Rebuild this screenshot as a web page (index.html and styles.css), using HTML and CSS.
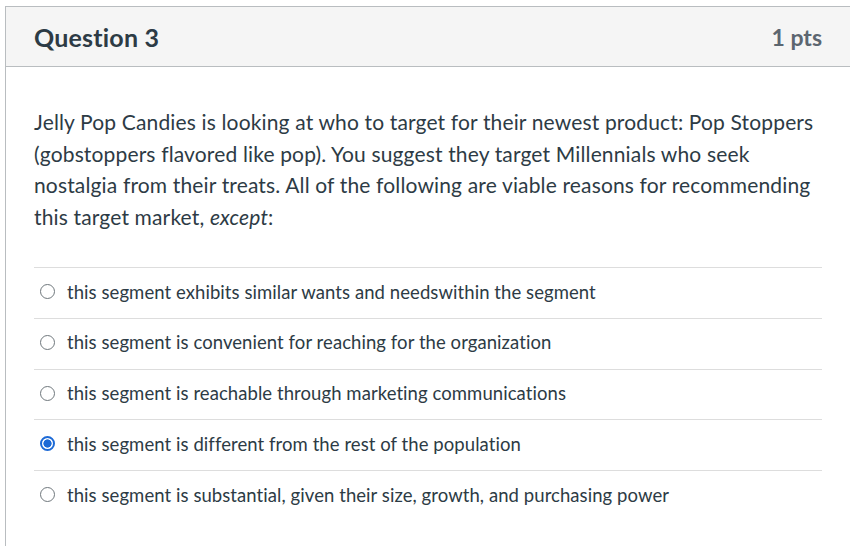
FILE: index.html
```html
<!DOCTYPE html>
<html>
<head>
<meta charset="utf-8">
<link rel="stylesheet" href="styles.css">
</head>
<body>
<div class="question">
  <div class="header">
    <h2 class="title">Question 3</h2>
    <span class="pts">1 pts</span>
  </div>
  <div class="body">
    <p class="text">Jelly Pop Candies is looking at who to target for their newest product: Pop Stoppers (gobstoppers flavored like pop). You suggest they target Millennials who seek nostalgia from their treats. All of the following are viable reasons for recommending this target market, <em>except</em>:</p>
    <div class="answers">
      <div class="answer"><span class="radio"></span><span class="label">this segment exhibits similar wants and needswithin the segment</span></div>
      <div class="answer"><span class="radio"></span><span class="label">this segment is convenient for reaching for the organization</span></div>
      <div class="answer"><span class="radio"></span><span class="label">this segment is reachable through marketing communications</span></div>
      <div class="answer"><span class="radio checked"></span><span class="label">this segment is different from the rest of the population</span></div>
      <div class="answer"><span class="radio"></span><span class="label">this segment is substantial, given their size, growth, and purchasing power</span></div>
    </div>
  </div>
</div>
</body>
</html>
```

FILE: styles.css
```css
html, body {
  margin: 0;
  padding: 0;
  background: #ffffff;
  overflow: hidden;
}
body {
  font-family: Lato, "Open Sans", sans-serif;
  color: #2d3b45;
}
.question {
  margin: 6px 0 0 5px;
  width: 846px;
  height: 540px;
  border: 1px solid #b9bdc0;
  border-bottom: none;
  box-sizing: border-box;
}
.header {
  display: flex;
  align-items: center;
  justify-content: space-between;
  height: 60px;
  padding: 1px 28px 0 28px;
  box-sizing: border-box;
  background: #f5f5f5;
  border-bottom: 1px solid #b9bdc0;
}
.title {
  margin: 0;
  font-size: 25px;
  letter-spacing: 0.2px;
  font-weight: 700;
  color: #2d3b45;
  line-height: 1;
}
.pts {
  font-size: 23px;
  font-weight: 700;
  color: #5c6670;
  line-height: 1;
}
.body {
  padding: 39px 28px 0 28px;
}
.text {
  margin: 0 0 35px 0;
  font-size: 21px;
  letter-spacing: 0.15px;
  line-height: 31.5px;
}
.answer {
  display: flex;
  align-items: center;
  border-top: 1px solid #dddddd;
  padding: 12.5px 0 15.25px 0;
  line-height: 22px;
  font-size: 18.5px;
  letter-spacing: 0.07px;
}
.radio {
  width: 15px;
  height: 15px;
  box-sizing: border-box;
  border: 1.5px solid #6f777c;
  border-radius: 50%;
  margin-left: 6px;
  margin-right: 12px;
  flex-shrink: 0;
  background: #fff;
}
.radio.checked {
  border: 2px solid #1d6ad6;
  background: radial-gradient(circle, #1d6ad6 0 3.8px, #ffffff 4.4px);
}
```
